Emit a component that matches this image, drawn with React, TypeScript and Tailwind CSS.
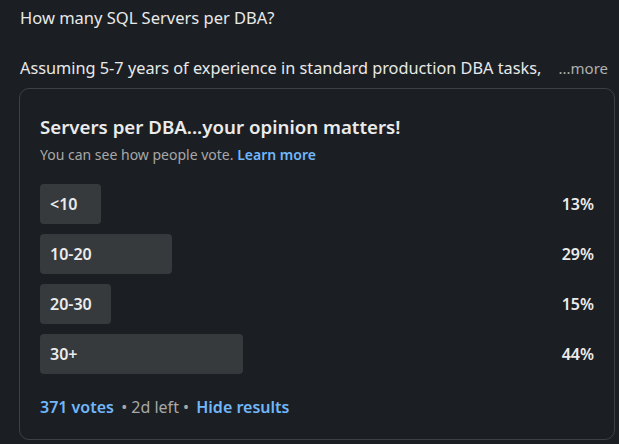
import React from "react"

const options = [
    { label: "<10", pct: "13%", width: "w-[61px]" },
    { label: "10-20", pct: "29%", width: "w-[132px]" },
    { label: "20-30", pct: "15%", width: "w-[71px]" },
    { label: "30+", pct: "44%", width: "w-[203px]" },
]

export default function App() {
    return (
        <div className="w-[619px] h-[444px] bg-[#1b1f23] text-[#e9e9e9] overflow-hidden font-['Noto_Sans',sans-serif]">
            {/* post text */}
            <div className="pl-5 pr-[11px] pt-[6px] text-[16.5px] leading-[24px]">
                <p>How many SQL Servers per DBA?</p>
                <p className="mt-[26px] flex justify-between items-baseline whitespace-nowrap">
                    <span className="text-[16.3px]">Assuming 5-7 years of experience in standard production DBA tasks,</span>
                    <span className="text-[15px] text-[#b0b0b0]">...more</span>
                </p>
            </div>

            {/* poll card */}
            <div className="ml-[19px] mr-[4px] mt-[8px] h-[352px] rounded-[10px] border border-[#3c4146] px-5 pt-[24px]">
                <h2 className="text-[18.7px] leading-[28px] font-semibold text-[#ebebeb] whitespace-nowrap">
                    Servers per DBA...your opinion matters!
                </h2>
                <p className="mt-[4px] text-[14px] leading-[20px] text-[#a8a8a8]">
                    You can see how people vote. <span className="font-semibold text-[#71b7fb]">Learn more</span>
                </p>

                <div className="mt-[19px] flex flex-col gap-[10px]">
                    {options.map((o) => (
                        <div key={o.label} className="flex items-center justify-between h-10">
                            <div className={`${o.width} h-10 rounded-[4px] bg-[#373a3d] flex items-center pl-[10px] text-[16px] font-semibold text-[#ebebeb] whitespace-nowrap`}>
                                {o.label}
                            </div>
                            <span className="text-[16px] font-semibold text-[#ebebeb]">{o.pct}</span>
                        </div>
                    ))}
                </div>

                <p className="mt-[21px] text-[16px] leading-[24px] text-[#a8a8a8] whitespace-nowrap">
                    <span className="font-semibold text-[#71b7fb]">371 votes</span>
                    <span className="px-[3px]">{" • 2d left • "}</span>
                    <span className="font-semibold text-[#71b7fb]">Hide results</span>
                </p>
            </div>
        </div>
    )
}
